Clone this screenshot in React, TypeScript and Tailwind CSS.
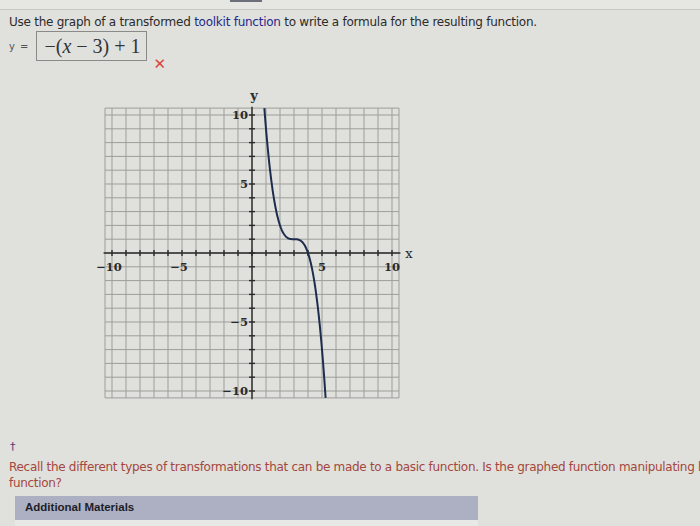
import React from 'react'

// graph geometry (svg units)
const OX = 157
const OY = 168
const UX = 14
const UY = 13.8
const px = (x: number) => OX + x * UX
const py = (y: number) => OY - y * UY

const f = (x: number) => -Math.pow(x - 3, 3) + 1

function curvePath() {
  const pts: string[] = []
  const x0 = 3 - Math.cbrt(9.5)
  const x1 = 3 + Math.cbrt(11.5)
  const n = 120
  for (let i = 0; i <= n; i++) {
    const x = x0 + ((x1 - x0) * i) / n
    pts.push(`${px(x).toFixed(2)},${py(f(x)).toFixed(2)}`)
  }
  return 'M' + pts.join(' L')
}

const ticks = Array.from({ length: 21 }, (_, i) => i - 10)

function Graph() {
  return (
    <svg width="320" height="325" viewBox="0 0 320 325" className="block">
      {/* grid */}
      <g stroke="#9d9d9b" strokeWidth="1">
        {ticks.map((t) => (
          <line key={'v' + t} x1={px(t)} x2={px(t)} y1={py(10.5)} y2={py(-10.5)} />
        ))}
        {ticks.map((t) => (
          <line key={'h' + t} y1={py(t)} y2={py(t)} x1={px(-10.5)} x2={px(10.5)} />
        ))}
        <line x1={px(-10.5)} x2={px(-10.5)} y1={py(10.5)} y2={py(-10.5)} />
        <line x1={px(10.5)} x2={px(10.5)} y1={py(10.5)} y2={py(-10.5)} />
        <line y1={py(10.5)} y2={py(10.5)} x1={px(-10.5)} x2={px(10.5)} />
        <line y1={py(-10.5)} y2={py(-10.5)} x1={px(-10.5)} x2={px(10.5)} />
      </g>
      {/* axes */}
      <g stroke="#2a2a2a" strokeWidth="1.4">
        <line x1={px(-10.6)} x2={px(10.6)} y1={OY} y2={OY} />
        <line x1={OX} x2={OX} y1={py(10.6)} y2={py(-10.6)} />
        {ticks.map((t) => (
          <line key={'tx' + t} x1={px(t)} x2={px(t)} y1={OY - 3} y2={OY + 3} />
        ))}
        {ticks.map((t) => (
          <line key={'ty' + t} y1={py(t)} y2={py(t)} x1={OX - 3} x2={OX + 3} />
        ))}
      </g>
      {/* labels */}
      <g fontFamily="'DejaVu Serif', 'Liberation Serif', serif" fontSize="11.5" fill="#2a2a2a" fontWeight="bold">
        <text x={px(-10) - 3} y={OY + 18} textAnchor="middle">−10</text>
        <text x={px(-5) - 3} y={OY + 18} textAnchor="middle">−5</text>
        <text x={px(5)} y={OY + 18} textAnchor="middle">5</text>
        <text x={px(10)} y={OY + 18} textAnchor="middle">10</text>
        <text x={OX - 4} y={py(10) + 4} textAnchor="end">10</text>
        <text x={OX - 4} y={py(5) + 4} textAnchor="end">5</text>
        <text x={OX - 4} y={py(-5) + 4} textAnchor="end">−5</text>
        <text x={OX - 4} y={py(-10) + 4} textAnchor="end">−10</text>
        <text x={OX + 2} y={py(10.5) - 8} textAnchor="middle" fontSize="13">y</text>
        <text x={px(11.2)} y={OY + 5} textAnchor="middle" fontSize="13" fontWeight="normal">x</text>
      </g>
      <path d={curvePath()} fill="none" stroke="#1e2c4e" strokeWidth="2" />
    </svg>
  )
}

export default function App() {
  return (
    <div className="w-[700px] h-[526px] overflow-hidden bg-[#e0e0dc] font-['DejaVu_Sans','Liberation_Sans',sans-serif] text-[#2b2b2b]">
      <div className="relative h-[10px] bg-[#e6e6e3] border-b border-[#c9c9c5]">
        <div className="absolute left-[230px] top-0 w-[32px] h-[2px] bg-[#6b6f78]" />
      </div>

      <div className="pl-[9px] pt-[4px]">
        <p className="text-[12px] leading-[16px] tracking-[-0.25px]">
          Use the graph of a transformed <span className="text-[#1f2a8a]">toolkit function</span> to write a formula for the resulting function.
        </p>

        <div className="flex items-start mt-[1px]">
          <span className="mt-[8px] text-[10px] text-[#555] tracking-[1px]">y =</span>
          <div className="ml-[7px] w-[111px] h-[30px] border border-[#8a8a88] flex items-center pl-[7px] font-['Liberation_Serif','DejaVu_Serif',serif] text-[20px] text-[#333] whitespace-nowrap">
            −(<i>x</i>&nbsp;−&nbsp;3)&nbsp;+&nbsp;1
          </div>
          <span className="ml-[6px] mt-[26px] text-[#d8443a] text-[15px] font-bold leading-none">✕</span>
        </div>

        <div className="ml-[86px] mt-[13px]">
          <Graph />
        </div>

        <div className="mt-[31px] h-[12px] text-[#4a3a7a] text-[11px] leading-[12px] pl-[1px]">†</div>
        <p className="mt-[6px] text-[#a4473e] text-[12px] leading-[16px] whitespace-nowrap tracking-[-0.3px]">
          Recall the different types of transformations that can be made to a basic function. Is the graphed function manipulating both
          <br />
          function?
        </p>
      </div>

      <div className="ml-[15px] mt-[5px] w-[463px] h-[24px] bg-[#adb0c3] flex items-center pl-[10px] font-['Liberation_Sans',Arial,sans-serif] font-bold text-[11.5px] text-[#1e1e28]">
        Additional Materials
      </div>
      <div className="ml-[15px] w-[463px] h-[10px] bg-[#e8e8e6]" />
    </div>
  )
}
